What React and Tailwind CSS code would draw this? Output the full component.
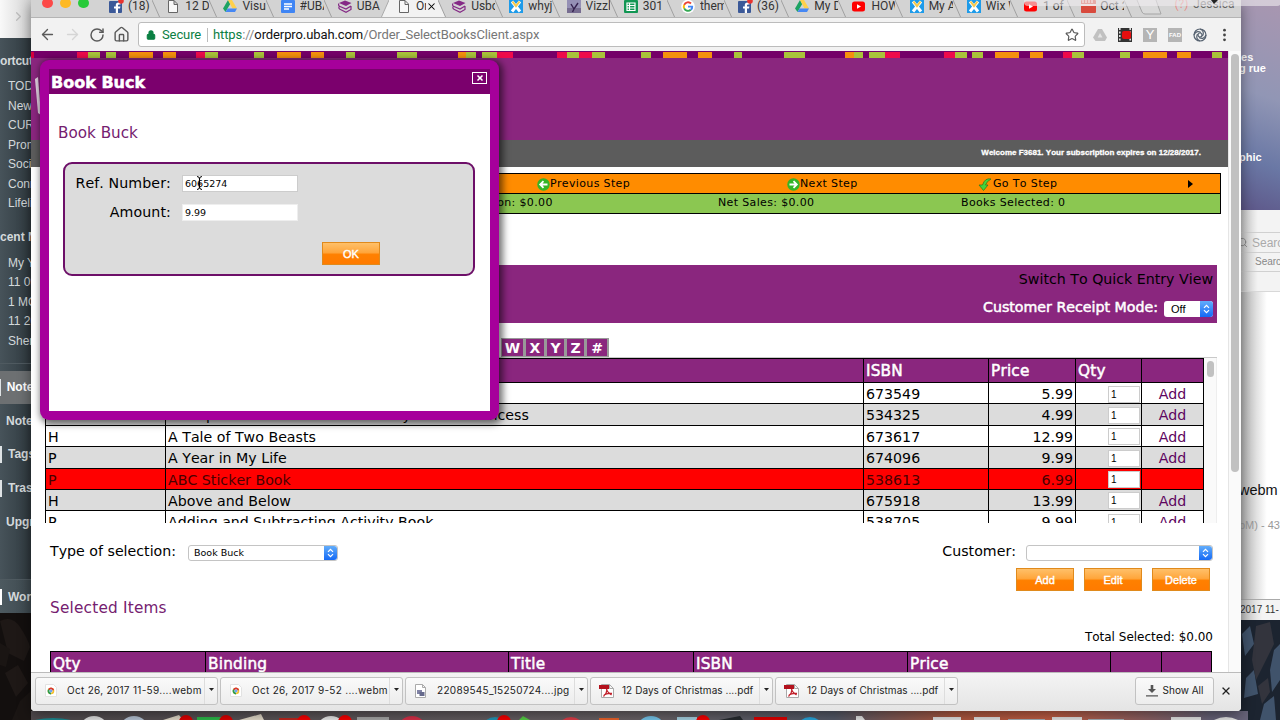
/**
 * Order entry desktop - Book Buck dialog over the book selection page
 */
import React from 'react'
import { ArrowLeft, ArrowRight, RotateCw, House, Lock, Star, X, Search, ChevronRight } from 'lucide-react'

const tabs = [
  { icon: 'facebook', label: '(18)' },
  { icon: 'page', label: '12 D' },
  { icon: 'drive', label: 'Visua' },
  { icon: 'doc', label: '#UBA' },
  { icon: 'books', label: 'UBA' },
  { icon: 'page', label: 'Or', active: true },
  { icon: 'books', label: 'Usbo' },
  { icon: 'wix', label: 'whyjo' },
  { icon: 'vizz', label: 'Vizzl' },
  { icon: 'sheet', label: '301' },
  { icon: 'google', label: 'them' },
  { icon: 'facebook', label: '(36)' },
  { icon: 'drive', label: 'My D' },
  { icon: 'youtube', label: 'HOW' },
  { icon: 'wix', label: 'My A' },
  { icon: 'wix', label: 'Wix W' },
  { icon: 'youtube', label: '1 of' },
  { icon: 'calendar', label: 'Oct 2' }
]

// [start, end, color] of the coloured blocks in the header stripe
const stripes = [
  [0, 3, '#d4003f'], [46, 57, '#ee0a4b'], [57, 69, '#a9c33a'], [75, 85, '#a9c33a'],
  [98, 122, '#f5900d'], [132, 145, '#f5900d'], [165, 174, '#ee0a4b'], [174, 187, '#a9c33a'],
  [223, 233, '#a9c33a'], [246, 270, '#f5900d'], [280, 293, '#f5900d'], [315, 324, '#a9c33a'],
  [366, 386, '#a9c33a'], [427, 435, '#f5900d'], [435, 445, '#a9c33a'], [451, 466, '#a9c33a'],
  [466, 482, '#ee0a4b'], [526, 536, '#ee0a4b'], [536, 548, '#a9c33a'], [548, 561, '#ee0a4b'],
  [561, 574, '#a9c33a'], [610, 620, '#a9c33a'], [632, 656, '#f5900d'], [667, 681, '#f5900d'],
  [703, 711, '#a9c33a'], [753, 774, '#a9c33a'], [814, 823, '#f5900d'], [823, 832, '#a9c33a'],
  [838, 854, '#a9c33a'], [854, 869, '#ee0a4b'], [913, 924, '#ee0a4b'], [924, 936, '#a9c33a'],
  [941, 952, '#a9c33a'], [964, 988, '#f5900d'], [999, 1012, '#f5900d'], [1032, 1041, '#ee0a4b'],
  [1041, 1053, '#a9c33a'], [1089, 1099, '#a9c33a'], [1112, 1136, '#f5900d'], [1146, 1160, '#f5900d'],
  [1181, 1191, '#a9c33a']
]

const books = [
  { binding: 'H', title: '', isbn: '673549', price: '5.99' },
  { binding: 'P', title: 'A Surprise for Princess Ellie - Pony-Crazed Princess', isbn: '534325', price: '4.99' },
  { binding: 'H', title: 'A Tale of Two Beasts', isbn: '673617', price: '12.99' },
  { binding: 'P', title: 'A Year in My Life', isbn: '674096', price: '9.99' },
  { binding: 'P', title: 'ABC Sticker Book', isbn: '538613', price: '6.99', selected: true },
  { binding: 'H', title: 'Above and Below', isbn: '675918', price: '13.99' },
  { binding: 'P', title: 'Adding and Subtracting Activity Book', isbn: '538705', price: '9.99' }
]

const downloads = [
  { icon: 'chrome', name: 'Oct 26, 2017 11-59....webm' },
  { icon: 'chrome', name: 'Oct 26, 2017 9-52 ....webm' },
  { icon: 'image', name: '22089545_15250724....jpg' },
  { icon: 'pdf', name: '12 Days of Christmas ....pdf' },
  { icon: 'pdf', name: '12 Days of Christmas ....pdf' }
]

const TabIcon = ({ name }) => {
  switch (name) {
    case 'facebook':
      return (
        <svg width="16" height="14" viewBox="0 0 16 14" className="shrink-0">
          <rect y="1" width="13" height="12" rx="1" fill="#3b5998" />
          <path d="M9 13V8.5H11L11.4 6.5H9V5.4Q9 4.5 10.2 4.5H11.5V2.6H9.6Q6.8 2.6 6.8 5.1V6.5H5V8.5H6.8V13Z" fill="#fff" />
          <circle cx="12" cy="1" r="2.8" fill="#e8342f" />
        </svg>
      )
    case 'page':
      return (
        <svg width="14" height="14" viewBox="0 0 14 14" className="shrink-0">
          <path d="M2.5 .5H8L11.5 4V12.5H2.5ZM8 .5V4.5H11.5" fill="#f8f8f8" stroke="#666" />
        </svg>
      )
    case 'drive':
      return (
        <svg width="14" height="14" viewBox="0 0 14 14" className="shrink-0">
          <path d="M5 0L0 8.5L2.5 12L7.2 4Z" fill="#1da362" />
          <path d="M5 0H9L14 8.5H9.5Z" fill="#ffd04b" />
          <path d="M4.7 8.5H14L12 12H2.5Z" fill="#4688f4" />
        </svg>
      )
    case 'doc':
      return (
        <svg width="14" height="14" viewBox="0 0 14 14" className="shrink-0">
          <rect width="14" height="13" rx="1" fill="#3f85f4" />
          <path d="M3 4H11M3 6.5H11M3 9H8" stroke="#fff" strokeWidth="1.4" />
        </svg>
      )
    case 'books':
      return (
        <svg width="14" height="14" viewBox="0 0 14 14" className="shrink-0">
          <path d="M1 3L7 .5L13.5 3L8 6Z" fill="#852a86" />
          <path d="M1 3.5Q-.2 5 1.5 6.2L8 9L13 6M1.5 6.2Q0 8 2 9.3L8 12.3L13 9.5V6" fill="none" stroke="#852a86" strokeWidth="1.2" />
        </svg>
      )
    case 'wix':
      return (
        <svg width="14" height="14" viewBox="0 0 14 14" className="shrink-0">
          <rect width="14" height="13" fill="#1e9be9" />
          <path d="M3 1.5L11 11.5M11 1.5L3 11.5" stroke="#fff" strokeWidth="3" />
          <path d="M3.5 1.5L7 6L10.5 1.5" fill="none" stroke="#f6c94a" strokeWidth="2" />
        </svg>
      )
    case 'vizz':
      return (
        <svg width="14" height="14" viewBox="0 0 14 14" className="shrink-0">
          <rect width="14" height="13" fill="#9590b5" />
          <rect y="8" width="14" height="5" fill="#776d91" />
          <path d="M4 4L7 9L11 3M7 9L5.5 12" fill="none" stroke="#35214e" strokeWidth="1.4" />
        </svg>
      )
    case 'sheet':
      return (
        <svg width="14" height="14" viewBox="0 0 14 14" className="shrink-0">
          <rect width="14" height="13" rx="1" fill="#119653" />
          <path d="M3 3H11V10.5H3ZM3 5.5H11M3 8H11M5.5 3V10.5" fill="none" stroke="#fff" strokeWidth="1.2" />
        </svg>
      )
    case 'google':
      return (
        <svg width="14" height="14" viewBox="0 0 14 14" className="shrink-0">
          <circle cx="7" cy="6.5" r="6.8" fill="#fff" />
          <path d="M10 3.5A4.2 4.2 0 0 0 3.2 4.8" fill="none" stroke="#ea4335" strokeWidth="1.9" />
          <path d="M3.2 4.8A4.2 4.2 0 0 0 3.2 8.4" fill="none" stroke="#fbbc05" strokeWidth="1.9" />
          <path d="M3.2 8.4A4.2 4.2 0 0 0 9.8 9.8" fill="none" stroke="#34a853" strokeWidth="1.9" />
          <path d="M9.8 9.8Q11.4 8.5 11.2 6.6H7" fill="none" stroke="#4285f4" strokeWidth="1.9" />
        </svg>
      )
    case 'youtube':
      return (
        <svg width="14" height="14" viewBox="0 0 14 14" className="shrink-0">
          <rect y="1.5" width="13" height="10" rx="2.5" fill="#f00" />
          <path d="M5 4.2L9 6.5L5 8.8Z" fill="#fff" />
        </svg>
      )
    default:
      return (
        <svg width="15" height="14" viewBox="0 0 15 14" className="shrink-0">
          <rect width="15" height="13" rx="1" fill="#d84a3d" />
          <rect y="4" width="15" height="2" fill="#f0d8d5" />
          <path d="M2 0V3M5 0V3M8 0V3M11 0V3" stroke="#fff" />
        </svg>
      )
  }
}

const FileIcon = ({ name }) => {
  if (name === 'chrome') {
    return (
      <svg width="16" height="16" viewBox="0 0 16 16" className="shrink-0">
        <path d="M1.5 1.5H9.5L12.5 4.5V13.5H1.5Z" fill="#fff" stroke="#e2e2e2" />
        <circle cx="7" cy="8" r="3.3" fill="#f2c230" />
        <path d="M7 8L4 6.3A3.4 3.4 0 0 1 10.2 7Z" fill="#d93a2f" />
        <path d="M7 8L4 6.3A3.4 3.4 0 0 0 7 11.4Z" fill="#2e9c4c" />
        <circle cx="7" cy="8" r="1.4" fill="#4285f4" stroke="#fff" strokeWidth=".5" />
      </svg>
    )
  }
  if (name === 'image') {
    return (
      <svg width="16" height="16" viewBox="0 0 16 16" className="shrink-0">
        <path d="M1.5 1.5H8.5L11.5 4.5V14.5H1.5ZM8.5 1.5V4.5H11.5" fill="#fff" stroke="#aaa" />
        <rect x="3" y="7" width="5" height="4" fill="#8183a5" />
        <rect x="5.5" y="9" width="5" height="4" fill="#666a8c" />
      </svg>
    )
  }
  return (
    <svg width="16" height="16" viewBox="0 0 16 16" className="shrink-0">
      <path d="M2.5 1.5H10.5L14.5 5.5V14.5H2.5ZM10.5 1.5V5.5H14.5" fill="#fff" stroke="#aaa" />
      <rect y="2" width="10" height="4" fill="#b3121d" />
      <path d="M7.5 6Q8 9 12.5 12M8 6.5Q8 10 4.5 13.5M5 12Q8 9.8 13 10.5" fill="none" stroke="#c1202b" strokeWidth="1.3" />
    </svg>
  )
}

const OrangeButton = ({ children }) => (
  <button className="h-[23px] w-[58px] border border-[#e08a1c] bg-[linear-gradient(#ffc069,#ffa63c_45%,#ff8000_55%,#ff7b00)] font-['Liberation_Sans'] text-[11px] leading-[20px] text-white [-webkit-text-stroke:0.4px_#fff]">
    {children}
  </button>
)

const Stepper = () => (
  <span className="flex h-full w-[13px] shrink-0 items-center justify-center rounded-r-[3px] bg-[linear-gradient(#62adfb,#1469f5)]">
    <svg width="7" height="10" viewBox="0 0 7 10" fill="none" stroke="#fff" strokeWidth="1.2">
      <path d="M1 3.8L3.5 1.3L6 3.8M1 6.2L3.5 8.7L6 6.2" />
    </svg>
  </span>
)

const NotesWindow = () => {
  const shortcuts = ['TODO', 'New', 'CURR', 'Promo', 'Social', 'Conn', 'Lifelin']
  const recent = ['My Ye', '11 09', '1 MO', '11 20', 'Sherri']
  const sections = ['Notes', 'Noteb', 'Tags', 'Trash', 'Upgra']
  return (
    <div className="absolute left-0 top-0 flex h-[720px] w-[40px] flex-col overflow-hidden whitespace-nowrap bg-[#141110] font-['Liberation_Sans'] text-[12px] text-[#d5dadc]">
      <div className="flex h-[38px] items-start bg-[linear-gradient(90deg,#f9f9f9,#c9c9c9)] pl-[11px] pt-[9px]">
        <ChevronRight size={15} color="#bbb" strokeWidth={2} />
      </div>
      <div className="h-[541px] bg-[linear-gradient(90deg,#47535a,#354046_60%,#232a2e)]">
        <div className="h-[39px] pt-[16px] font-bold leading-[14px] tracking-[-0.2px]">ortcuts</div>
        {shortcuts.map((item) => (
          <div key={item} className="h-[19.5px] pl-2 leading-[19px]">{item}</div>
        ))}
        <div className="h-[39px] pt-[16px] font-bold leading-[14px]">cent Notes</div>
        <div className="h-[111px] border-b border-[#4f5a60]">
          {recent.map((item) => (
            <div key={item} className="h-[19.5px] pl-2 leading-[20px]">{item}</div>
          ))}
        </div>
        <div className="pt-[7px]">
          {sections.map((item, index) => (
            <div
              key={item}
              className={`flex h-[33.6px] items-center gap-[6px] font-bold ${index === 0 ? 'bg-[#6d7072] text-white' : ''}`}
            >
              <span className="h-[17px] w-[2px] bg-[#dfe3e5]"></span>
              {item}
            </div>
          ))}
        </div>
      </div>
      <div className="flex h-[34px] items-center gap-[6px] border-t border-[#4f5a60] bg-[linear-gradient(90deg,#4d5a60,#39444a)] font-bold">
        <span className="h-[16px] w-[2px] bg-white"></span>Work
      </div>
      <svg width="40" height="107" viewBox="0 0 40 107">
        <rect width="40" height="107" fill="#130f0e" />
        <path d="M0 8Q12 2 20 14T30 34L24 48L8 40ZM5 60L18 52L28 70L16 84Z" fill="#1e1816" />
        <path d="M0 30L10 36L6 54L0 52ZM20 88L31 78V107H12Z" fill="#1a1513" />
      </svg>
    </div>
  )
}

const FinderWindow = () => (
  <div className="absolute left-[1236px] top-0 flex h-[720px] w-[44px] flex-col overflow-hidden whitespace-nowrap font-['Liberation_Sans']">
    <div className="h-[210px] bg-[linear-gradient(200deg,#a996b0,#9196b5_45%,#6a78a5_75%,#5d5688)] text-[11px] font-bold leading-[11px] text-white">
      <div className="pl-[2px] pt-[52px]">les</div>
      <div className="pl-[3px]">g rue</div>
      <div className="pl-[3px] pt-[78px]">phic</div>
    </div>
    <div className="h-[82px] border-b border-[#d8d8d8] bg-[linear-gradient(90deg,#bdbdbd,#f3f3f3_50%)] text-[#aaa]">
      <div className="mt-[22px] flex h-[21px] items-center gap-1 border-y border-[#d0d0d0] pl-px text-[12px]">
        <Search size={11} color="#888" className="shrink-0" />Search
      </div>
      <div className="h-[19px] border-b border-[#d0d0d0] pl-[19px] text-[10px] leading-[17px] text-[#888]">Search</div>
    </div>
    <div className="h-[308px] border-b border-[#aaa] bg-[linear-gradient(90deg,#a5a5a5,#fff_70%)] pt-[189px]">
      <div className="pl-[3px] text-[14.5px] leading-[18px] text-[#111]">webm</div>
      <div className="pl-[3px] pt-[9px] text-[11px] leading-[34px] text-[#999]">bM) - 43</div>
    </div>
    <div className="h-[20px] bg-[linear-gradient(90deg,#b5b5b5,#f4f4f4_60%)] pl-1 text-[10px] leading-[20px] text-[#333]">2017 11-</div>
    <svg width="44" height="100" viewBox="0 0 44 100">
      <rect width="44" height="100" fill="#1c2430" />
      <path d="M6 14L14 6L18 24L9 36ZM38 30L44 24V60L36 72L34 50ZM10 58L18 50L22 74L8 78ZM28 84L38 76L40 100H24Z" fill="#40536b" />
      <path d="M20 6L34 2L38 24L28 44L20 60L16 40ZM22 66L32 58L34 72L26 84Z" fill="#33343d" />
    </svg>
  </div>
)

const TabStrip = () => (
  <div className="flex h-[18px] overflow-hidden border-b border-[#b4b4b4] bg-[#d3d3d3]">
    <div className="flex w-[72px] gap-[7px] pl-[11px]">
      <span className="-mt-[2px] h-[10px] w-[11px] rounded-full bg-[#fc4948]"></span>
      <span className="-mt-[2px] h-[10px] w-[11px] rounded-full bg-[#fdb924]"></span>
      <span className="-mt-[2px] h-[10px] w-[11px] rounded-full bg-[#28ca3a]"></span>
    </div>
    {tabs.map((tab, index) => (
      <div
        key={index}
        className={`flex h-[18px] w-[57.2px] shrink-0 items-start ${tab.active ? 'bg-[#f2f2f2]' : 'bg-[#d3d3d3]'}`}
      >
        <div className={`flex h-[14px] w-[49px] shrink-0 items-start overflow-hidden ${tab.active ? 'pl-2' : 'pl-[6px]'}`}>
          <span className="w-[19px] shrink-0"><TabIcon name={tab.icon} /></span>
          <span className={`shrink-0 overflow-hidden whitespace-nowrap font-['Roboto'] text-[12px] leading-[13px] text-[#333] ${tab.active ? 'w-[10px]' : 'w-[24px]'}`}>
            {tab.label}
          </span>
          {tab.active && <X size={11} strokeWidth={2.2} className="mt-[1px] shrink-0" />}
        </div>
        <svg width="8" height="18" viewBox="0 0 8 18" className="shrink-0">
          {index === 4 ? (
            <>
              <path d="M8 0L0 18H8Z" fill="#f2f2f2" />
              <path d="M8 0L0 18" stroke="#aaa" />
            </>
          ) : (
            <>
              <path d="M0 0L8 18V0Z" fill="#d3d3d3" />
              <path d="M0 0L8 18" stroke="#a0a0a0" />
            </>
          )}
        </svg>
      </div>
    ))}
    <svg width="30" height="18" viewBox="0 0 30 18" className="shrink-0">
      <path d="M5 0L10 12Q11 14 13 14H29L24 0" fill="#d9d9d9" stroke="#a5a5a5" />
    </svg>
    <div className="flex shrink-0 gap-[5px] pl-[12px] font-['Roboto'] text-[12px] leading-[8px] text-[#666]">
      <span className="text-[#e68a86]">(?)</span>
      <span>Jessica</span>
    </div>
  </div>
)

const Toolbar = () => (
  <div className="flex h-[33px] items-center bg-[#f2f2f2] pl-[8px] text-[#5a5a5a]">
    <div className="flex w-[99px] shrink-0 items-center gap-[8px]">
      <ArrowLeft size={17} strokeWidth={1.9} />
      <ArrowRight size={17} strokeWidth={1.9} color="#d5d5d5" />
      <RotateCw size={16} strokeWidth={2.2} />
      <House size={17} strokeWidth={2} />
    </div>
    <div className="flex h-[25px] w-[947px] shrink-0 items-center rounded-[3px] border border-[#bcbcbc] bg-white pl-[7px] pr-[5px] font-['Roboto'] text-[13px] tracking-[-0.1px]">
      <Lock size={10} color="#0b8043" fill="#0b8043" strokeWidth={2.5} />
      <span className="ml-[6px] w-[46px] border-r border-[#bbb] leading-[14px] text-[#0b8043]">Secure</span>
      <span className="ml-[5px] text-[#0b8043]">https</span>
      <span className="text-[#888]">://</span>
      <span className="text-[#111]">orderpro.ubah.com</span>
      <span className="text-[#777]">/Order_SelectBooksClient.aspx</span>
      <Star size={14} className="ml-auto" />
    </div>
    <div className="flex items-center gap-[11px] pl-[8px]">
      <svg width="14" height="14" viewBox="0 0 14 14">
        <path d="M5 1H9L14 9.5L12 13H2.5L0 9.5Z" fill="#c1c1c1" />
        <path d="M7 5L9.5 9.5H4.7Z" fill="#e5e5e5" />
      </svg>
      <svg width="14" height="14" viewBox="0 0 14 14">
        <rect width="14" height="14" fill="#333" />
        <path d="M1.8 0V14M12.2 0V14" stroke="#ddd" strokeWidth="1.6" strokeDasharray="2 1.5" />
        <rect x="4" y="3" width="9" height="8" rx="2" fill="#e50f0f" />
      </svg>
      <span className="h-[14px] w-[14px] bg-[#b5b5b5] text-center font-['Liberation_Sans'] text-[13px] leading-[14px] text-white">Y</span>
      <span className="h-[14px] w-[14px] bg-[#b5b5b5] text-center font-['Liberation_Sans'] text-[6px] font-bold leading-[14px] text-white">FAD</span>
      <svg width="14" height="14" viewBox="0 0 14 14" fill="none" stroke="#566270" strokeWidth="1.2">
        <circle cx="7" cy="7" r="6" />
        <circle cx="7" cy="7" r="2" />
        <path d="M1 7Q3 2 8 4.5M7 1Q12 3 9.5 8M13 7Q11 12 6 9.5M7 13Q2 11 4.5 6" />
      </svg>
      <svg width="14" height="14" viewBox="0 0 14 14" fill="#444">
        <circle cx="6.5" cy="2.2" r="1.4" />
        <circle cx="6.5" cy="7" r="1.4" />
        <circle cx="6.5" cy="11.8" r="1.4" />
      </svg>
    </div>
  </div>
)

const StripeBar = () => (
  <div className="flex h-[7px] w-[1197px] items-end bg-[#750068]">
    {stripes.map(([start, end, color], index) => (
      <span
        key={start}
        className="h-[6px] shrink-0"
        style={{
          width: end - start,
          marginLeft: start - (index > 0 ? stripes[index - 1][1] : 0),
          backgroundColor: color
        }}
      ></span>
    ))}
  </div>
)

const PageHeader = () => (
  <div className="w-[1197px]">
    <StripeBar />
    <div className="h-[82px] bg-[#8a267e] pl-1 pt-[19px]">
      <svg width="8" height="40" viewBox="0 0 8 40">
        <path d="M0 2L3 0L6 38L3 36Z" fill="#e5d4e4" />
      </svg>
    </div>
    <div className="flex h-[27px] justify-end bg-[#5c5c5c] pr-[27px] font-['Liberation_Sans'] text-[8px] font-bold leading-[26px] text-white [-webkit-text-stroke:0.3px_#fff]">
      Welcome F3681. Your subscription expires on 12/28/2017.
    </div>
  </div>
)

const StepMenu = () => (
  <div className="ml-[14px] mt-[6px] w-[1176px] border border-black text-[11px] tracking-[0.35px] text-black">
    <div className="flex h-[20px] items-center border-b border-black bg-[#ff8c00] pt-px">
      <div className="ml-[491px] flex w-[250px] items-center">
        <svg width="13" height="13" viewBox="0 0 13 13">
          <circle cx="6.5" cy="6.5" r="6.2" fill="#35b526" />
          <path d="M10.5 6.5H3.5M6.5 3.2L3.2 6.5L6.5 9.8" fill="none" stroke="#fff" strokeWidth="1.8" />
        </svg>
        Previous Step
      </div>
      <div className="flex w-[191px] items-center">
        <svg width="13" height="13" viewBox="0 0 13 13">
          <circle cx="6.5" cy="6.5" r="6.2" fill="#35b526" />
          <path d="M2.5 6.5H9.5M6.5 3.2L9.8 6.5L6.5 9.8" fill="none" stroke="#fff" strokeWidth="1.8" />
        </svg>
        Next Step
      </div>
      <div className="flex w-[210px] items-center">
        <svg width="15" height="13" viewBox="0 0 15 13">
          <path d="M13 1Q7 -.5 4.5 7H1L5.5 12.5L10 7H7.5Q9 3 13 1Z" fill="#43d43b" stroke="#217a1c" strokeWidth=".7" />
        </svg>
        Go To Step
      </div>
      <svg width="5" height="8" viewBox="0 0 5 8"><path d="M0 0L5 4L0 8Z" /></svg>
    </div>
    <div className="flex h-[19px] items-center bg-[#8bc751]">
      <span className="ml-[395px] w-[277px]">Commission: $0.00</span>
      <span className="w-[243px]">Net Sales: $0.00</span>
      <span>Books Selected: 0</span>
    </div>
  </div>
)

const BookTable = () => (
  <div className="ml-[14px] flex h-[166px] w-[1172px] overflow-hidden border-t border-[#c9c9c9]">
    <div className="w-[1159px] shrink-0 border-l border-black text-[14.2px]">
      <div className="grid h-[25px] grid-cols-[120px_698px_125px_87px_66px_62px] border-y border-black bg-[#8a267e] text-[15.3px] leading-[24px] tracking-[0.2px] text-white [-webkit-text-stroke:0.5px_#fff]">
        {['Binding', 'Title', 'ISBN', 'Price', 'Qty', ''].map((label, index) => (
          <div key={index} className="border-r border-black pl-[2px]">{label}</div>
        ))}
      </div>
      {books.map((book, index) => (
        <div
          key={book.isbn}
          className={`grid h-[21.4px] grid-cols-[120px_698px_125px_87px_66px_62px] border-b border-black leading-[22px] ${
            book.selected ? 'bg-[#ff0000] text-[#4a0000]' : index % 2 ? 'bg-[#dcdcdc]' : 'bg-white'
          }`}
        >
          <div className="border-r border-black pl-[2px]">{book.binding}</div>
          <div className="border-r border-black pl-[2px]">{book.title}</div>
          <div className="border-r border-black pl-[2px]">{book.isbn}</div>
          <div className="border-r border-black pr-[2px] text-right">{book.price}</div>
          <div className="flex items-center justify-end border-r border-black pr-[1px]">
            <span className="h-[17px] w-[32px] border border-[#ccc] bg-white pl-[2px] font-['Liberation_Sans'] text-[10px] leading-[16px] text-black">1</span>
          </div>
          <div className="border-r border-black text-center text-[#5e0560]">{book.selected ? '' : 'Add'}</div>
        </div>
      ))}
    </div>
    <div className="w-[13px] border-r border-[#eee] bg-[#fafafa] pl-[3px] pt-[3px]">
      <div className="h-[16px] w-[7px] rounded-full bg-[#c1c1c1]"></div>
    </div>
  </div>
)

const SelectedHeader = () => (
  <div className="ml-[19px] mt-[5px] grid h-[30px] w-[1162px] grid-cols-[155px_303px_185px_214px_203px_51px_50px] border border-r-0 border-black bg-[#8a267e] text-[15.3px] leading-[24px] tracking-[0.2px] text-white [-webkit-text-stroke:0.5px_#fff]">
    {['Qty', 'Binding', 'Title', 'ISBN', 'Price', '', ''].map((label, index) => (
      <div key={index} className="border-r border-black pl-[2px]">{label}</div>
    ))}
  </div>
)

const OrderPage = () => (
  <div className="flex h-[621px] overflow-hidden bg-white font-['DejaVu_Sans'] text-[14.2px] text-black [font-kerning:none]">
    <div className="w-[1197px] shrink-0">
      <PageHeader />
      <StepMenu />
      <div className="ml-[14px] mt-[51px] h-[58px] w-[1172px] bg-[#8a267e] pr-[4px]">
        <div className="flex h-[29px] justify-end leading-[29px]">Switch To Quick Entry View</div>
        <div className="flex h-[29px] items-center justify-end gap-[6px] text-white">
          <span className="-mt-px [-webkit-text-stroke:0.5px_#fff]">Customer Receipt Mode:</span>
          <span className="flex h-[16px] w-[49px] justify-between rounded-[3px] bg-white pl-[7px] font-['Liberation_Sans'] text-[11px] leading-[16px] text-black">
            Off<Stepper />
          </span>
        </div>
      </div>
      <div className="ml-[470px] mt-[15px] flex h-[19px] text-center text-[14px] font-bold leading-[19px] text-white">
        <span className="w-[24px] border border-r-2 border-[#999] bg-[#8a267e]">W</span>
        <span className="w-[21px] border border-r-2 border-[#999] bg-[#8a267e]">X</span>
        <span className="w-[20px] border border-r-2 border-[#999] bg-[#8a267e]">Y</span>
        <span className="w-[20px] border border-r-2 border-[#999] bg-[#8a267e]">Z</span>
        <span className="w-[23px] border border-r-2 border-[#999] bg-[#8a267e]">#</span>
      </div>
      <BookTable />
      <div className="mt-[19px] flex h-[20px] items-center pl-[19px] pr-[15px]">
        <span className="w-[138px]">Type of selection:</span>
        <span className="mt-[2px] flex h-[16px] w-[150px] justify-between rounded-[3px] border border-[#c4c4c4] pl-[5px] text-[9.5px] leading-[14px]">
          Book Buck<Stepper />
        </span>
        <span className="ml-auto">Customer:</span>
        <span className="ml-[10px] mt-[2px] flex h-[16px] w-[187px] justify-end rounded-[3px] border border-[#c4c4c4]"><Stepper /></span>
      </div>
      <div className="mt-[6px] flex gap-[10px] pl-[985px]">
        <OrangeButton>Add</OrangeButton>
        <OrangeButton>Edit</OrangeButton>
        <OrangeButton>Delete</OrangeButton>
      </div>
      <h2 className="mt-[5px] pl-[19px] text-[15.3px] leading-[24px] tracking-[0.2px] text-[#75206f]">Selected Items</h2>
      <div className="mt-[8px] pr-[15px] text-right text-[12px] leading-[18px]">Total Selected: $0.00</div>
      <SelectedHeader />
    </div>
    <div className="w-[13px] border-l border-[#e5e5e5] bg-[#fafafa] pl-[2px] pt-[3px]">
      <div className="h-[418px] w-[8px] rounded-full bg-[#c1c1c1]"></div>
    </div>
  </div>
)

const DownloadBar = () => (
  <div className="flex h-[39px] items-start gap-[2px] border-t border-[#bbb] bg-[linear-gradient(#f4f4f4,#e4e4e4)] pl-[4px] pt-[4px] font-['Inter'] text-[10px] text-[#222]">
    {downloads.map((file, index) => (
      <div key={index} className="flex h-[28px] w-[183px] items-center rounded-[3px] border border-[#c2c2c2] bg-[linear-gradient(#fafafa,#ededed)] pl-[8px]">
        <FileIcon name={file.icon} />
        <span className={`ml-[7px] flex-1 whitespace-nowrap pb-px ${file.icon === 'pdf' ? 'tracking-[0.05px]' : 'tracking-[0.3px]'}`}>
          {file.name}
        </span>
        <span className="flex h-full w-[13px] items-center justify-center border-l border-[#ddd] pb-[3px]">
          <svg width="5" height="3" viewBox="0 0 5 3"><path d="M0 0H5L2.5 3Z" fill="#222" /></svg>
        </span>
      </div>
    ))}
    <div className="ml-auto flex h-[28px] w-[79px] items-center justify-center gap-[5px] rounded-[3px] border border-[#c2c2c2] bg-[linear-gradient(#fafafa,#ededed)]">
      <svg width="12" height="12" viewBox="0 0 12 12" fill="#555">
        <path d="M4.7 0H7.3V4H10L6 8L2 4H4.7ZM0 10.3H12V11.6H0Z" />
      </svg>
      <span className="pb-px">Show All</span>
    </div>
    <X size={12} strokeWidth={2.5} className="ml-[4px] mr-[9px] mt-[8px]" />
  </div>
)

const BookBuckDialog = () => (
  <div className="absolute left-[40px] top-[60px] h-[360px] w-[459px] rounded-[9px] bg-[#a6009b] p-[9px] font-['DejaVu_Sans'] text-black shadow-[2px_2px_7px_2px_rgba(0,0,0,0.55)] [font-kerning:none]">
    <div className="flex h-[25px] items-start justify-between bg-[#7b006d] pl-[2px] pr-[3px]">
      <span className="text-[16px] font-bold leading-[28px] text-white [-webkit-text-stroke:0.5px_#fff]">Book Buck</span>
      <button className="mt-[3px] flex h-[12px] w-[15px] items-center justify-center border border-white">
        <X size={8} color="#fff" strokeWidth={5} />
      </button>
    </div>
    <div className="h-[317px] bg-white pl-[9px] pt-[27px]">
      <h2 className="h-[41px] text-[15.2px] leading-[25px] text-[#75206f]">Book Buck</h2>
      <div className="ml-[5px] h-[114px] w-[412px] rounded-[9px] border-2 border-[#6d0f68] bg-[#dcdcdc] pt-[9px]">
        <div className="flex h-[21px] items-center text-[14.2px]">
          <span className="w-[106px] text-right tracking-[0.1px]">Ref. Number:</span>
          <span className="relative ml-[11px] h-[17px] w-[116px] border border-[#ccc] bg-white pl-[2px] text-[9.5px] leading-[16px]">
            6065274
            <svg className="absolute left-[13px] top-0" width="7" height="14" viewBox="0 0 7 14" fill="none" stroke="#000">
              <path d="M1 .5Q3.5 .5 3.5 3V11Q3.5 13.5 1 13.5M6 .5Q3.5 .5 3.5 3M6 13.5Q3.5 13.5 3.5 11M2 8H5" />
            </svg>
          </span>
        </div>
        <div className="mt-[8px] flex h-[21px] items-center text-[14.2px]">
          <span className="w-[106px] text-right tracking-[0.1px]">Amount:</span>
          <span className="ml-[11px] h-[17px] w-[116px] border border-[#eee] bg-white pl-[2px] text-[9.5px] leading-[16px]">9.99</span>
        </div>
        <div className="mt-[19px] flex pl-[257px]">
          <OrangeButton>OK</OrangeButton>
        </div>
      </div>
    </div>
  </div>
)

const Dock = () => (
  <div className="absolute left-[31px] top-[711px] h-[9px] w-[1217px] overflow-hidden bg-[linear-gradient(90deg,#524c4f,#6b6468_50%,#565c6a_66%,#b35a41_76%,#c45f45_84%,#68647a_97%)]">
    <svg width="1217" height="9" viewBox="0 0 1217 9">
      <path d="M4 9Q22 5 40 9Z" fill="#1e8b92" />
      <circle cx="63" cy="20" r="15" fill="#e5e5e5" />
      <circle cx="103" cy="20" r="15" fill="#b9c7d8" />
      <path d="M132 9L148 4L152 9ZM208 9L230 3L233 9Z" fill="#e8dfce" />
      <rect x="166" y="6" width="24" height="3" fill="#2dbb4a" />
      <circle cx="155" cy="11" r="7" fill="#e50000" />
      <circle cx="195" cy="11" r="7" fill="#e50000" />
      <rect x="248" y="7" width="24" height="2" fill="#c32820" />
      <circle cx="273" cy="11" r="7" fill="#f00" />
      <circle cx="300" cy="20" r="15" fill="#eee" />
      <circle cx="314" cy="11" r="7" fill="#f00" />
      <rect x="326" y="6" width="32" height="3" fill="#aaa" />
      <circle cx="381" cy="20" r="15" fill="#dd314a" />
      <circle cx="464" cy="20" r="14" fill="#2698b8" />
      <circle cx="473" cy="11" r="7" fill="#f00" />
      <path d="M488 9L492 5L499 9Z" fill="#57d246" />
      <circle cx="540" cy="20" r="14" fill="#e13f4a" />
      <rect x="568" y="7" width="20" height="2" fill="#ee642b" />
      <circle cx="620" cy="20" r="15" fill="#78c9ef" />
      <rect x="646" y="6" width="20" height="3" fill="#a8d5e5" />
      <circle cx="672" cy="11" r="7" fill="#f00" />
      <path d="M688 9L709 5L712 9Z" fill="#272b30" />
      <rect x="723" y="6" width="33" height="3" fill="#e50000" />
      <circle cx="779" cy="20" r="14" fill="#29a9df" />
      <path d="M825 9V5H831L834 9ZM902 6H930V9H902ZM943 6H969V9H943ZM1021 6H1051V9H1021ZM1140 6H1170V9H1140ZM1183 9Q1195 3 1207 9Z" fill="#e8e8e8" />
      <path d="M977 8H1014V9H977ZM1057 8H1093V9H1057Z" fill="#a8b2b9" />
    </svg>
  </div>
)

const App = () => (
  <div className="relative h-[720px] w-[1280px] overflow-hidden bg-[#1b1918]">
    <NotesWindow />
    <FinderWindow />
    <Dock />
    {/* Browser window */}
    <div className="absolute left-[31px] top-0 h-[711px] w-[1210px] overflow-hidden rounded-b-[4px] bg-white shadow-[0_4px_14px_rgba(0,0,0,0.45)]">
      <TabStrip />
      <Toolbar />
      <OrderPage />
      <DownloadBar />
    </div>
    <BookBuckDialog />
    {/* Notification edge at the top of the desktop */}
    <div className="absolute left-[1024px] top-0 h-[6px] w-[257px] rounded-b-[4px] bg-[#f0edf0]/60"></div>
    <svg className="absolute left-[1210px] top-0" width="9" height="5" viewBox="0 0 9 5">
      <path d="M1 0H8L4 4Z" fill="#222" />
    </svg>
  </div>
)

export default App
